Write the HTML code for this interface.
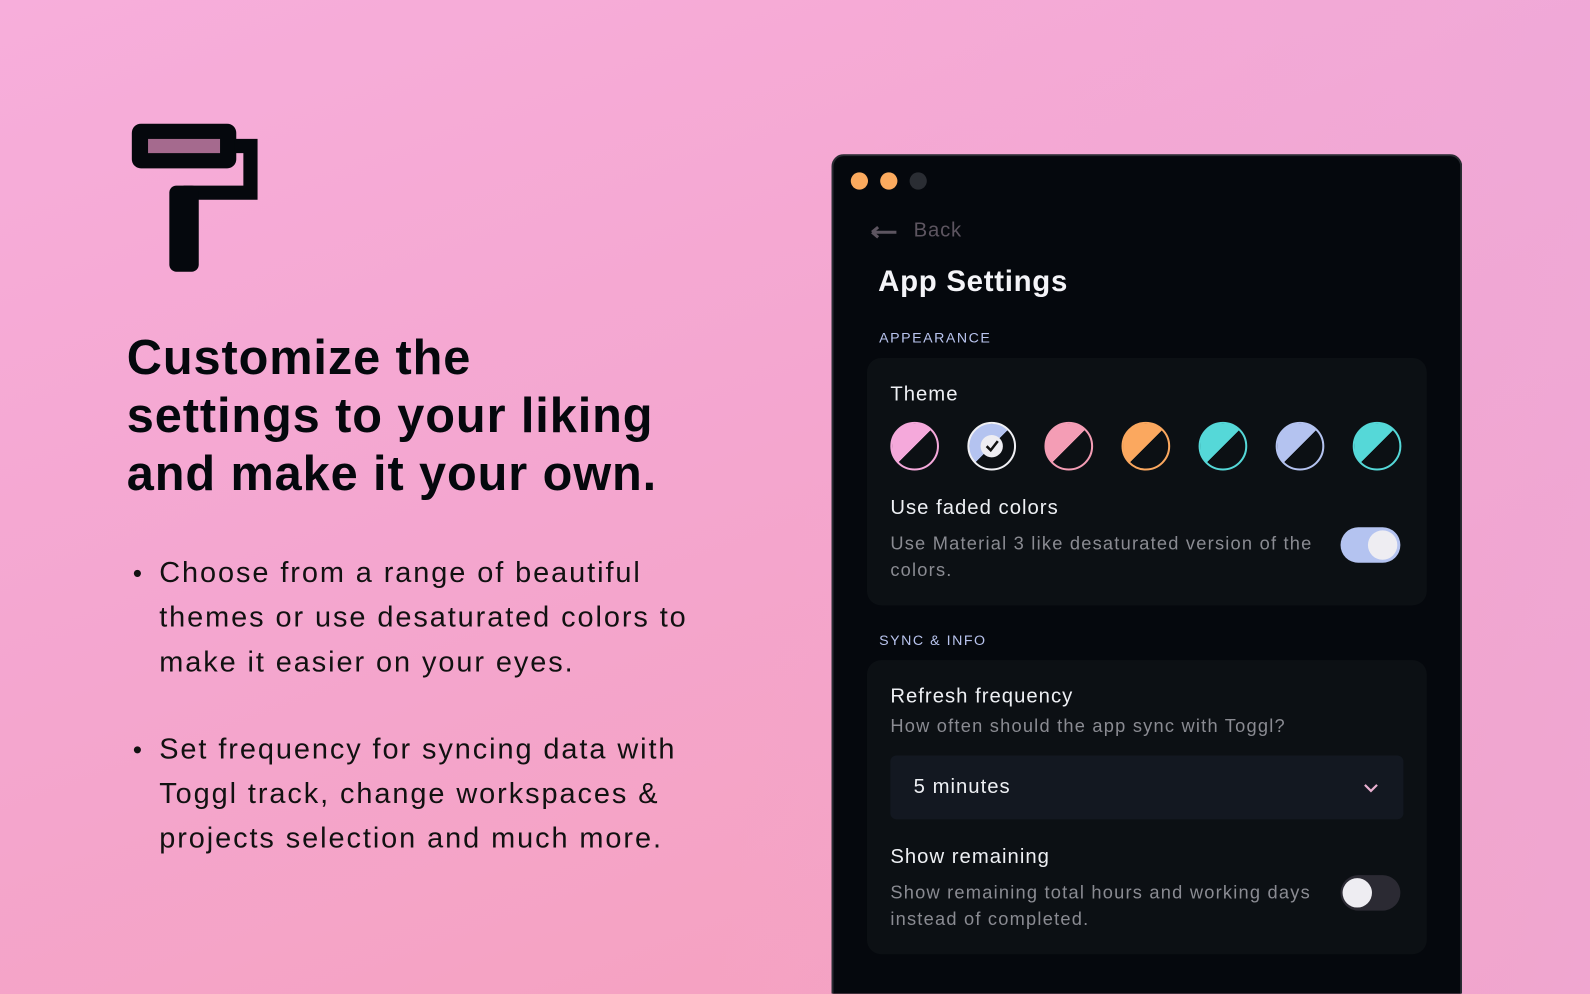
<!DOCTYPE html>
<html><head><meta charset="utf-8"><style>
*{margin:0;padding:0;box-sizing:border-box}
html,body{width:1590px;height:994px;overflow:hidden}
body{position:relative;font-family:"Liberation Sans",sans-serif;background:linear-gradient(100deg,rgba(0,0,0,0) 50%,rgba(236,170,222,.6) 100%),linear-gradient(160deg,#f7aedb 0%,#f4a6cf 45%,#f6a0ba 100%)}
#w{position:absolute;left:0;top:0;width:1590px;height:994px;overflow:hidden}
#s{position:absolute;left:0;top:0;width:1568px;height:980px;transform:scale(1.01403);transform-origin:0 0}
.a{position:absolute;white-space:nowrap}
h1{position:absolute;left:125px;top:325px;font-size:48px;line-height:57px;font-weight:bold;color:#05080d;letter-spacing:0.9px}
ul{position:absolute;left:157px;font-size:28.5px;line-height:44px;color:#111;list-style:none;letter-spacing:1.9px}
ul li{position:relative;white-space:nowrap}
ul li:first-child:before{content:"";position:absolute;left:-25px;top:19px;width:7px;height:7px;border-radius:50%;background:#111}
.win{position:absolute;left:820px;top:152px;width:622px;height:828px;background:#05080d;border:2px solid #2a2c33;border-bottom:none;border-radius:12px 12px 0 0}
.card{position:absolute;left:855px;width:552px;background:#0c1014;border-radius:14px}
.t{color:#eef0f4;font-size:20px;letter-spacing:1px}
.d{color:#8a8b92;font-size:18px;line-height:26px;letter-spacing:1.2px}
.sec{color:#b9c4ee;font-size:14px;letter-spacing:1.5px}
.c{position:absolute;top:416px;width:48px;height:48px;border-radius:50%;border:2px solid}
.tg{position:absolute;left:1322px;width:59px;height:35px;border-radius:18px}
.kn{position:absolute;top:3px;width:29px;height:29px;border-radius:50%;background:#eeedf2}
</style></head><body><div id="w"><div id="s">
<svg class="a" style="left:0;top:0" width="300" height="300">
<rect x="130" y="122" width="103" height="44" rx="9" fill="#05080d"/>
<rect x="146" y="137" width="71" height="14" fill="#a56a8e"/>
<path d="M231 144 H247 V190 H181" fill="none" stroke="#05080d" stroke-width="14"/>
<rect x="167" y="183" width="29" height="85" rx="7" fill="#05080d"/>
</svg>
<h1>Customize the<br>settings to your liking<br>and make it your own.</h1>
<ul style="top:543px"><li>Choose from a range of beautiful</li><li>themes or use desaturated colors to</li><li>make it easier on your eyes.</li></ul>
<ul style="top:717px"><li>Set frequency for syncing data with</li><li>Toggl track, change workspaces &amp;</li><li>projects selection and much more.</li></ul>
<div class="win"></div>
<div class="a" style="left:839px;top:170px;width:17px;height:17px;border-radius:50%;background:#fbaa5e"></div>
<div class="a" style="left:868px;top:170px;width:17px;height:17px;border-radius:50%;background:#fbaa5e"></div>
<div class="a" style="left:897px;top:170px;width:17px;height:17px;border-radius:50%;background:#2a2d33"></div>
<svg class="a" style="left:858px;top:221px" width="28" height="16"><path d="M2 8H26M2 8L8 3M2 8L8 13" stroke="#5d5560" stroke-width="3" fill="none"/></svg>
<div class="a" style="left:901px;top:216px;font-size:20px;color:#5d5560;letter-spacing:0.8px">Back</div>
<div class="a" style="left:866px;top:262px;font-size:29px;font-weight:bold;color:#f4f4f8;letter-spacing:0.7px">App Settings</div>
<div class="a sec" style="left:867px;top:325px">APPEARANCE</div>
<div class="card" style="top:353px;height:244px"></div>
<div class="a t" style="left:878px;top:378px">Theme</div>
<div class="c" style="left:878px;border-color:#f5a9db;background:linear-gradient(135deg,#f5a9db 50%,#0c1014 50%)"></div>
<div class="c" style="left:954px;border-color:#f0f0f4;background:linear-gradient(135deg,#b4c3f0 50%,#0c1014 50%)"><div style="position:absolute;left:11px;top:11px;width:22px;height:22px;border-radius:50%;background:#eeedf2"></div><svg style="position:absolute;left:13px;top:13px" width="18" height="18"><path d="M4 9L8 13L15 4" stroke="#111" stroke-width="2.5" fill="none"/></svg></div>
<div class="c" style="left:1030px;border-color:#f49db5;background:linear-gradient(135deg,#f49db5 50%,#0c1014 50%)"></div>
<div class="c" style="left:1106px;border-color:#fba85f;background:linear-gradient(135deg,#fba85f 50%,#0c1014 50%)"></div>
<div class="c" style="left:1182px;border-color:#55d8d8;background:linear-gradient(135deg,#55d8d8 50%,#0c1014 50%)"></div>
<div class="c" style="left:1258px;border-color:#b4c3f0;background:linear-gradient(135deg,#b4c3f0 50%,#0c1014 50%)"></div>
<div class="c" style="left:1334px;border-color:#55d8d8;background:linear-gradient(135deg,#55d8d8 50%,#0c1014 50%)"></div>
<div class="a t" style="left:878px;top:490px">Use faded colors</div>
<div class="a d" style="left:878px;top:523px">Use Material 3 like desaturated version of the<br>colors.</div>
<div class="tg" style="top:520px;background:#b4c3f0"><div class="kn" style="left:27px"></div></div>
<div class="a sec" style="left:867px;top:623px">SYNC &amp; INFO</div>
<div class="card" style="top:651px;height:290px"></div>
<div class="a t" style="left:878px;top:676px">Refresh frequency</div>
<div class="a d" style="left:878px;top:703px">How often should the app sync with Toggl?</div>
<div class="a" style="left:878px;top:745px;width:506px;height:63px;background:#131821;border-radius:6px"></div>
<div class="a t" style="left:901px;top:765px">5 minutes</div>
<svg class="a" style="left:1344px;top:771px" width="16" height="12"><path d="M2 3L8 9L14 3" stroke="#e8b0d0" stroke-width="2.2" fill="none"/></svg>
<div class="a t" style="left:878px;top:834px">Show remaining</div>
<div class="a d" style="left:878px;top:867px">Show remaining total hours and working days<br>instead of completed.</div>
<div class="tg" style="top:863px;background:#2b2a33"><div class="kn" style="left:2px;top:3px"></div></div>
</div></div></body></html>
